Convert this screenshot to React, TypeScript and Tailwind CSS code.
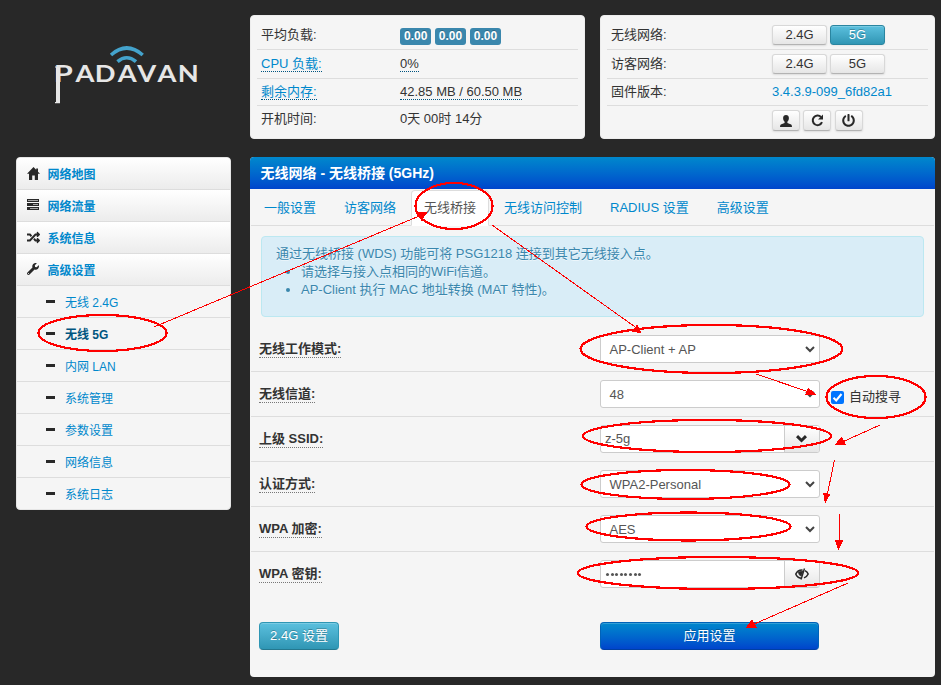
import type { ReactNode } from "react";
import clsx from "clsx";
import { FaRandom, FaWrench, FaPowerOff } from "react-icons/fa";

const mainMenu = [
  { label: "网络地图", icon: <HomeIcon /> },
  { label: "网络流量", icon: <TasksIcon /> },
  { label: "系统信息", icon: <FaRandom className="h-[13px] w-[13px]" /> },
  { label: "高级设置", icon: <FaWrench className="h-[12px] w-[12px]" /> },
];

const subMenu = ["无线 2.4G", "无线 5G", "内网 LAN", "系统管理", "参数设置", "网络信息", "系统日志"];

const tabs = ["一般设置", "访客网络", "无线桥接", "无线访问控制", "RADIUS 设置", "高级设置"];

function HomeIcon() {
  return (
    <svg width="13" height="13" viewBox="0 0 13 13" fill="#282828">
      <path d="M6.500 0L0 6.800h2V13h3.200V8.500h2.600V13H11V6.800h2l-2-2.100V1.500H9.200v1.300z" />
    </svg>
  );
}

function TasksIcon() {
  return (
    <svg width="12" height="12" viewBox="0 0 12 12" shapeRendering="crispEdges">
      <path d="M0 0h12v3H0zM0 4h12v3H0zM0 8h12v3H0z" fill="#282828" />
      <path d="M1 1h10v1H1zM6 5h5v1H6zM3 9h8v1H3z" fill="#a5a5a5" />
    </svg>
  );
}

function Logo() {
  return (
    <svg width="150" height="66" viewBox="0 0 150 66">
      <g fill="none" stroke="#44a3cc" strokeWidth="3.6">
        <path d="M61 12Q76.700 -2 92.700 12" />
        <path d="M67.500 18.700Q76.700 10.800 86 18.700" />
      </g>
      <g fill="#e6e6e6" fontFamily='"Lato", "Liberation Sans", sans-serif' fontSize="22" fontWeight="700">
        <text transform="scale(1.4 1)" x="2.700" y="39.200">P</text>
        <text transform="scale(1.24 1)" x="20.600 36 54.700 70.300 86.700 103" y="39.200">ADAVAN</text>
      </g>
      <path d="M6 23.400h4V60H6zM5 23.400h4v1.200H5zM5 59h5v1.300H5z" fill="#e6e6e6" />
    </svg>
  );
}

function SmallButton({ children, active, icon }: { children: ReactNode; active?: boolean; icon?: boolean }) {
  return (
    <button
      className={clsx(
        "flex items-center justify-center rounded-[3px] border leading-[18px]",
        icon ? "h-[21px] w-[28px]" : "h-5 w-[55px]",
        active
          ? "border-[#2a85a0] bg-linear-to-b from-[#5bc0de] to-[#2f96b4] text-white shadow-[inset_0_1px_0_rgba(255,255,255,.2),0_1px_2px_rgba(0,0,0,.05)] [text-shadow:0_-1px_0_rgba(0,0,0,.25)]"
          : "border-[#d8d8d8] border-b-[#b3b3b3] bg-linear-to-b from-white to-[#e6e6e6] text-[#333] shadow-[0_1px_2px_rgba(0,0,0,.1)]"
      )}
    >
      {children}
    </button>
  );
}

function Dotted({ children, blue }: { children: ReactNode; blue?: boolean }) {
  return (
    <span className={clsx("h-[17px] border-b border-dotted border-[#005580] leading-[17px]", blue && "text-[#08c]")}>
      {children}
    </span>
  );
}

function StatusPanel() {
  return (
    <div className="h-[124px] w-[335px] rounded-[4px] border border-[#ededed] bg-[#f5f5f5] px-[6px] pt-[5px]">
      <div className="flex h-[29px] items-center border-b border-[#ddd] pl-1">
        <span className="w-[139px]">平均负载:</span>
        <div className="flex gap-[3.500px] pt-[2px]">
          {[0, 1, 2].map((i) => (
            <span key={i} className="h-[17px] rounded-[3px] bg-[#3a87ad] px-1 text-[12px] leading-[16px] font-bold text-white [text-shadow:0_-1px_0_rgba(0,0,0,.25)]">
              0.00
            </span>
          ))}
        </div>
      </div>
      <div className="flex h-[29px] items-center border-b border-[#ddd] pb-px pl-1">
        <div className="flex w-[139px]">
          <Dotted blue>CPU 负载:</Dotted>
        </div>
        <Dotted>0%</Dotted>
      </div>
      <div className="flex h-[27px] items-center border-b border-[#ddd] pb-[2px] pl-1">
        <div className="flex w-[139px]">
          <Dotted blue>剩余内存:</Dotted>
        </div>
        <Dotted>42.85 MB / 60.50 MB</Dotted>
      </div>
      <div className="flex h-[26px] items-center pl-1">
        <span className="w-[139px]">开机时间:</span>
        <span>0天 00时 14分</span>
      </div>
    </div>
  );
}

function WirelessPanel() {
  return (
    <div className="h-[124px] w-[335px] rounded-[4px] border border-[#ededed] bg-[#f5f5f5] px-[6px] pt-[5px]">
      <div className="flex h-[29px] items-center border-b border-[#ddd] pl-1">
        <span className="w-[161px]">无线网络:</span>
        <div className="flex gap-[3px]">
          <SmallButton>2.4G</SmallButton>
          <SmallButton active>5G</SmallButton>
        </div>
      </div>
      <div className="flex h-[29px] items-center border-b border-[#ddd] pl-1">
        <span className="w-[161px]">访客网络:</span>
        <div className="flex gap-[3px]">
          <SmallButton>2.4G</SmallButton>
          <SmallButton>5G</SmallButton>
        </div>
      </div>
      <div className="flex h-[27px] items-center border-b border-[#ddd] pl-1">
        <span className="w-[161px]">固件版本:</span>
        <span className="text-[#08c]">3.4.3.9-099_6fd82a1</span>
      </div>
      <div className="flex gap-[3.400px] pt-1 pl-[165px]">
        <SmallButton icon>
          <svg width="12" height="12" viewBox="0 0 12 12" fill="#282828">
            <path d="M6 0C4.200 0 3.100 1.100 3.100 3c0 1.600.7 2.900 1.500 3.700v1.200L.8 9.400Q0 10 0 12h12q0-2-.8-2.600L7.400 7.900V6.700C8.200 5.900 8.900 4.600 8.900 3 8.900 1.100 7.800 0 6 0z" />
          </svg>
        </SmallButton>
        <SmallButton icon>
          <svg width="13" height="13" viewBox="0 0 13 13">
            <path d="M10 3A4.800 4.800 0 1 0 11 8.200" fill="none" stroke="#282828" strokeWidth="2" />
            <path d="M12 .5v5H7z" fill="#282828" />
          </svg>
        </SmallButton>
        <SmallButton icon>
          <FaPowerOff className="h-[13px] w-[13px] text-[#282828]" />
        </SmallButton>
      </div>
    </div>
  );
}

function Sidebar() {
  return (
    <nav className="h-[353px] w-[215px] overflow-hidden rounded-[4px] border border-[#e5e5e5] bg-[#f5f5f5] text-[12px] text-[#08c]">
      {mainMenu.map((item) => (
        <div key={item.label} className="flex h-8 items-center border-b border-[#ddd] bg-linear-to-b from-white to-[#ececec] pt-[2px] pl-[10px] font-bold">
          <span className="mb-[3px] flex w-[20.500px] text-[#282828]">{item.icon}</span>
          {item.label}
        </div>
      ))}
      {subMenu.map((label, i) => (
        <div key={label} className="flex h-8 items-center border-b border-[#ddd] pt-[2px] pl-[29px] last:border-b-0">
          <span className="mr-[10px] mb-[3px] h-[3px] w-[9px] bg-[#282828]" />
          <span className={clsx(i === 1 && "font-bold text-[#005580]")}>{label}</span>
        </div>
      ))}
    </nav>
  );
}

function Chevron() {
  return (
    <svg width="10" height="7" viewBox="0 0 10 7" fill="none" stroke="#444" strokeWidth="2">
      <path d="M1 1l4 4 4-4" />
    </svg>
  );
}

function Select({ value }: { value: string }) {
  return (
    <div className="flex h-7 w-[220px] items-center justify-between rounded-[3px] border border-[#ccc] bg-white pt-px pr-1 pl-[8.500px] text-[#555]">
      {value}
      <Chevron />
    </div>
  );
}

function InputGroup({ children, icon }: { children: ReactNode; icon: ReactNode }) {
  return (
    <div className="flex h-7 w-[220px] overflow-hidden rounded-[3px] border border-[#ccc] bg-white text-[#555]">
      <div className="flex flex-1 items-center pl-1">{children}</div>
      <div className="flex w-[35px] items-center justify-center border-l border-[#ccc] bg-linear-to-b from-white to-[#e6e6e6] pr-px">{icon}</div>
    </div>
  );
}

function FormRow({ label, children }: { label: string; children: ReactNode }) {
  return (
    <div className="flex h-[45px] items-center border-b border-[#ddd] pl-2 last:h-[44px] last:border-b-0">
      <div className="flex w-[341px] pb-px">
        <span className="h-[18px] border-b border-dotted border-[#777] leading-[18px] font-bold">{label}</span>
      </div>
      {children}
    </div>
  );
}

function BridgePanel() {
  return (
    <main className="h-[520px] w-[685px] overflow-hidden rounded-[4px] bg-[#f5f5f5]">
      <h1 className="h-8 bg-linear-to-b from-[#08c] to-[#04c] pl-[10.500px] text-[14px] leading-8 font-bold text-white">无线网络 - 无线桥接 (5GHz)</h1>
      <div className="mx-px flex h-[37px] gap-[2px] border-b border-[#ddd] pt-px">
        {tabs.map((tab, i) => (
          <div
            key={tab}
            className={clsx(
              "h-[36px] rounded-t-[4px] border px-3 leading-[34px] whitespace-nowrap",
              i === 2 ? "border-[#ddd] border-b-white bg-white text-[#555]" : "border-transparent text-[#08c]"
            )}
          >
            {tab}
          </div>
        ))}
      </div>
      <div className="mx-[11px] mt-[10px] h-[81px] rounded-[4px] border border-[#bce8f1] bg-[#d9edf7] pt-2 pl-[14px] leading-[18px] text-[#3a87ad] [text-shadow:0_1px_0_rgba(255,255,255,.5)]">
        <p>通过无线桥接 (WDS) 功能可将 PSG1218 连接到其它无线接入点。</p>
        <ul className="list-disc pl-[25px]">
          <li>请选择与接入点相同的WiFi信道。</li>
          <li>AP-Client 执行 MAC 地址转换 (MAT 特性)。</li>
        </ul>
      </div>
      <div className="mx-px mt-[10px]">
        <FormRow label="无线工作模式:">
          <Select value="AP-Client + AP" />
        </FormRow>
        <FormRow label="无线信道:">
          <Select value="48" />
          <label className="ml-[11px] flex items-center gap-[5px] pt-[5px]">
            <span className="mt-px flex h-[13px] w-[13px] items-center justify-center rounded-[2px] bg-[#0075ff]">
              <svg width="11" height="11" viewBox="0 0 11 11" fill="none" stroke="#fff" strokeWidth="2">
                <path d="M1.500 5.700l2.700 2.700L9.500 2" />
              </svg>
            </span>
            自动搜寻
          </label>
        </FormRow>
        <FormRow label="上级 SSID:">
          <InputGroup
            icon={
              <svg width="11" height="8" viewBox="0 0 11 8" fill="none" stroke="#282828" strokeWidth="3">
                <path d="M1 1.200l4.500 4.300L10 1.200" />
              </svg>
            }
          >
            z-5g
          </InputGroup>
        </FormRow>
        <FormRow label="认证方式:">
          <Select value="WPA2-Personal" />
        </FormRow>
        <FormRow label="WPA 加密:">
          <Select value="AES" />
        </FormRow>
        <FormRow label="WPA 密钥:">
          <InputGroup
            icon={
              <svg width="14" height="12" viewBox="0 0 14 12" fill="none" stroke="#282828">
                <path d="M6 10.200C3.500 9.800 1.500 8 .8 6 2 3.500 4.500 1.800 7.500 2" strokeWidth="1.600" />
                <path d="M10 2.600c1.500.8 2.600 2 3.200 3.400-.8 1.800-2.300 3.200-4.200 3.900" strokeWidth="1.500" />
                <path d="M9.500.5L6 11.500" strokeWidth="1.400" />
                <path d="M3.600 4c0 2.500.8 3.500 2.600 4L8 3z" fill="#282828" strokeWidth=".8" />
              </svg>
            }
          >
            <span className="flex gap-[1.600px] pl-px">
              {Array.from({ length: 8 }, (_, i) => (
                <span key={i} className="h-[3px] w-[3px] rounded-full bg-[#555]" />
              ))}
            </span>
          </InputGroup>
        </FormRow>
      </div>
      <div className="mt-[26px] flex pl-[9px]">
        <button className="mr-[261px] h-7 w-20 rounded-[4px] border border-[#2f96b4] border-b-[#24788f] bg-linear-to-b from-[#5bc0de] to-[#2f96b4] pb-px text-white shadow-[inset_0_1px_0_rgba(255,255,255,.2)] [text-shadow:0_-1px_0_rgba(0,0,0,.25)]">
          2.4G 设置
        </button>
        <button className="h-7 w-[219px] rounded-[4px] border border-[#0062b8] border-b-[#003fa3] bg-linear-to-b from-[#08c] to-[#04c] pb-px text-white shadow-[inset_0_1px_0_rgba(255,255,255,.2)] [text-shadow:0_-1px_0_rgba(0,0,0,.25)]">
          应用设置
        </button>
      </div>
    </main>
  );
}

const circles = [
  { cx: 102.5, cy: 333, rx: 64, ry: 18 },
  { cx: 454, cy: 206, rx: 38.5, ry: 23 },
  { cx: 711.5, cy: 349, rx: 131, ry: 24 },
  { cx: 876, cy: 397, rx: 49.5, ry: 21 },
  { cx: 707, cy: 436, rx: 124, ry: 16 },
  { cx: 685.5, cy: 484.5, rx: 104, ry: 14.5 },
  { cx: 688.5, cy: 526.5, rx: 102, ry: 14 },
  { cx: 718, cy: 573, rx: 140.5, ry: 16 },
];

const arrows = [
  { line: "M154 327L424 214", head: "415.5,212.5 428,211.5 421.5,220.5" },
  { line: "M492 225L638 329", head: "641.5,333 632,332 637,324.5" },
  { line: "M756 374L812 393", head: "817,395 805,395 808,387.5" },
  { line: "M880 425L840 443", head: "834.5,445 841.5,436.5 846,445" },
  { line: "M834.500 460L827 496", head: "825,503.5 823,492.5 830.5,494" },
  { line: "M839.500 514L839 545", head: "838.5,550.5 834.5,539.5 843.5,539.5" },
  { line: "M848 583L752 625", head: "745.5,628 752,619.5 757,628" },
];

// Red marks that walk through the setup steps
function Guide() {
  return (
    <svg className="pointer-events-none absolute inset-0" width="941" height="685" shapeRendering="crispEdges">
      {circles.map((c) => (
        <ellipse key={c.cy} {...c} fill="none" stroke="#f00" strokeWidth="2.2" />
      ))}
      {arrows.map((a) => (
        <g key={a.line}>
          <path d={a.line} stroke="#f00" />
          <polygon points={a.head} fill="#f00" />
        </g>
      ))}
    </svg>
  );
}

export default function App() {
  return (
    <div className="relative h-[685px] w-[941px] overflow-hidden bg-[#282828] pt-[15px] font-['Liberation_Sans','Noto_Sans_CJK_SC',sans-serif] text-[13px] leading-[18px] text-[#333]">
      <header className="flex h-[142px]">
        <div className="w-[250px] pt-[28px] pl-[50px]">
          <Logo />
        </div>
        <div className="flex gap-[15px]">
          <StatusPanel />
          <WirelessPanel />
        </div>
      </header>
      <div className="flex gap-[19px] pl-4">
        <Sidebar />
        <BridgePanel />
      </div>
      <Guide />
    </div>
  );
}
